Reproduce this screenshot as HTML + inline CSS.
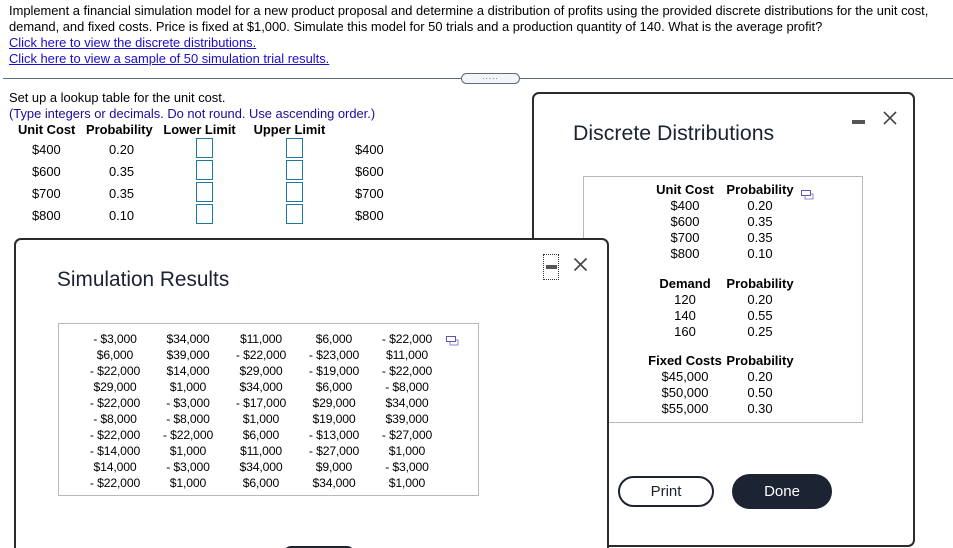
<!DOCTYPE html>
<html><head><meta charset="utf-8"><style>
*{margin:0;padding:0;box-sizing:border-box}
html,body{width:953px;height:548px;overflow:hidden}
body{background:#fff;font-family:"Liberation Sans",Arial,sans-serif;font-size:12.9px;color:#000;position:relative}
.a{position:absolute;white-space:nowrap}
.lnk{color:#1a0dcc;text-decoration:underline}
.box{position:absolute;width:17px;height:20px;border:1.5px solid #1b7a9a;background:#fff}
.c{position:absolute;text-align:center;white-space:nowrap}
.dlg{position:absolute;background:#fff;border:2px solid #2b2b2b;border-radius:7px}
.ttl{position:absolute;font-size:20.8px;color:#1a2233;white-space:nowrap}
.tb{font-size:13px;line-height:16px}
.ts{font-size:12.2px;line-height:16px;letter-spacing:-0.15px}
b{font-weight:bold}
</style></head><body>
<div class="a" style="left:9px;top:3px;line-height:16px">Implement a financial simulation model for a new product proposal and determine a distribution of profits using the provided discrete distributions for the unit cost,<br>demand, and fixed costs. Price is fixed at $1,000. Simulate this model for 50 trials and a production quantity of 140. What is the average profit?<br><span class="lnk">Click here to view the discrete distributions.</span><br><span class="lnk">Click here to view a sample of 50 simulation trial results.</span></div>
<div class="a" style="left:3px;top:78px;width:950px;height:1px;background:#5a6b7d"></div>
<div class="a" style="left:461px;top:73px;width:59px;height:11px;border:1px solid #5a6b7d;border-radius:6px;background:#f3f5f8;font-size:8px;line-height:6px;text-align:center;color:#555;letter-spacing:1px">.....</div>
<div class="a" style="left:9px;top:90px">Set up a lookup table for the unit cost.</div>
<div class="a" style="left:9px;top:106px;color:#1a0d9a">(Type integers or decimals. Do not round. Use ascending order.)</div>
<div class="a" style="left:18px;top:122px;font-weight:bold">Unit Cost&nbsp;&nbsp; Probability&nbsp;&nbsp; Lower Limit&nbsp;&nbsp;&nbsp;&nbsp; Upper Limit</div>
<div class="a" style="left:32px;top:139px;line-height:22px">$400<br>$600<br>$700<br>$800</div>
<div class="a" style="left:109px;top:139px;line-height:22px">0.20<br>0.35<br>0.35<br>0.10</div>
<div class="a" style="left:355px;top:139px;line-height:22px">$400<br>$600<br>$700<br>$800</div>
<div class="box" style="left:196px;top:138px"></div><div class="box" style="left:196px;top:160px"></div><div class="box" style="left:196px;top:182px"></div><div class="box" style="left:196px;top:204px"></div>
<div class="box" style="left:286px;top:138px"></div><div class="box" style="left:286px;top:160px"></div><div class="box" style="left:286px;top:182px"></div><div class="box" style="left:286px;top:204px"></div>

<div class="dlg" style="left:532px;top:92px;width:383px;height:455px">
<div class="ttl" style="left:39px;top:27px;font-size:21.3px">Discrete Distributions</div>
<div class="a" style="left:318px;top:26px;width:13px;height:4px;background:#555"></div>
<svg class="a" style="left:348px;top:16px" width="16" height="16"><path d="M2 2L14 14M14 2L2 14" stroke="#444" stroke-width="1.6"/></svg>
<div class="a" style="left:49px;top:82px;width:280px;height:247px;border:1px solid #b8b8b8"></div>
<div class="c tb" style="left:108px;top:88px;width:86px"><b>Unit Cost</b><br>$400<br>$600<br>$700<br>$800</div>
<div class="c tb" style="left:188px;top:88px;width:76px"><b>Probability</b><br>0.20<br>0.35<br>0.35<br>0.10</div>
<div class="c tb" style="left:108px;top:182px;width:86px"><b>Demand</b><br>120<br>140<br>160</div>
<div class="c tb" style="left:188px;top:182px;width:76px"><b>Probability</b><br>0.20<br>0.55<br>0.25</div>
<div class="c tb" style="left:104px;top:259px;width:94px"><b>Fixed Costs</b><br>$45,000<br>$50,000<br>$55,000</div>
<div class="c tb" style="left:188px;top:259px;width:76px"><b>Probability</b><br>0.20<br>0.50<br>0.30</div>
<svg class="a" style="left:267px;top:96px" width="13" height="10"><rect x="0.5" y="0.5" width="9" height="5" fill="none" stroke="#5a5aaa"/><path d="M4 6v3h8V4h-2" fill="none" stroke="#8888cc"/></svg>
<div class="a" style="left:84px;top:382px;width:96px;height:31px;border:2px solid #1c2333;border-radius:16px;text-align:center;line-height:27px;font-size:15px;color:#1c2333">Print</div>
<div class="a" style="left:198px;top:380px;width:100px;height:35px;background:#1c2333;border-radius:18px;text-align:center;line-height:35px;font-size:15px;color:#fff">Done</div>
</div>

<div class="dlg" style="left:14px;top:238px;width:595px;height:330px">
<div class="ttl" style="left:41px;top:28px">Simulation Results</div>
<div class="a" style="left:527px;top:14px;width:16px;height:26px;border:1px dotted #333"></div>
<div class="a" style="left:530px;top:25px;width:11px;height:4px;background:#555"></div>
<svg class="a" style="left:557px;top:17px" width="15" height="15"><path d="M1.5 1.5L13.5 13.5M13.5 1.5L1.5 13.5" stroke="#444" stroke-width="1.6"/></svg>
<div class="a" style="left:42px;top:83px;width:421px;height:173px;border:1px solid #b8b8b8"></div>
<div class="c ts" style="left:64px;top:91px;width:70px">- $3,000<br>$6,000<br>- $22,000<br>$29,000<br>- $22,000<br>- $8,000<br>- $22,000<br>- $14,000<br>$14,000<br>- $22,000</div>
<div class="c ts" style="left:137px;top:91px;width:70px">$34,000<br>$39,000<br>$14,000<br>$1,000<br>- $3,000<br>- $8,000<br>- $22,000<br>$1,000<br>- $3,000<br>$1,000</div>
<div class="c ts" style="left:210px;top:91px;width:70px">$11,000<br>- $22,000<br>$29,000<br>$34,000<br>- $17,000<br>$1,000<br>$6,000<br>$11,000<br>$34,000<br>$6,000</div>
<div class="c ts" style="left:283px;top:91px;width:70px">$6,000<br>- $23,000<br>- $19,000<br>$6,000<br>$29,000<br>$19,000<br>- $13,000<br>- $27,000<br>$9,000<br>$34,000</div>
<div class="c ts" style="left:356px;top:91px;width:70px">- $22,000<br>$11,000<br>- $22,000<br>- $8,000<br>$34,000<br>$39,000<br>- $27,000<br>$1,000<br>- $3,000<br>$1,000</div>
<svg class="a" style="left:430px;top:96px" width="13" height="10"><rect x="0.5" y="0.5" width="9" height="5" fill="none" stroke="#5a5aaa"/><path d="M4 6v3h8V4h-2" fill="none" stroke="#8888cc"/></svg>
<div class="a" style="left:268px;top:306px;width:70px;height:14px;background:#1c2333;border-radius:8px"></div>
</div>
</body></html>
